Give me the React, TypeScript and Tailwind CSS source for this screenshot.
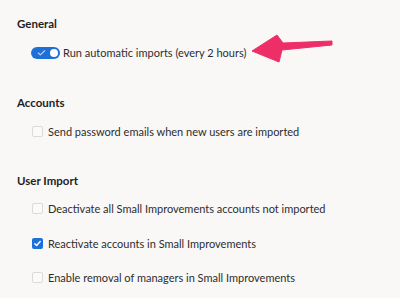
import React from "react";

const Check = ({ checked }: { checked?: boolean }) =>
  checked ? (
    <span className="flex h-[11px] w-[11px] shrink-0 items-center justify-center rounded-[2px] bg-[#1f6fd8]">
      <svg width="9" height="9" viewBox="0 0 10 10" fill="none">
        <path d="M2 5.2l2 2 4-4.4" stroke="white" strokeWidth="1.6" strokeLinecap="round" strokeLinejoin="round" />
      </svg>
    </span>
  ) : (
    <span className="h-[11px] w-[11px] shrink-0 rounded-[2px] border border-[#dcdad8] bg-[#fbfaf9]" />
  );

const Row = ({ checked, label }: { checked?: boolean; label: string }) => (
  <div className="flex h-[12px] items-center gap-[5px] pl-[32px]">
    <Check checked={checked} />
    <span className="whitespace-nowrap text-[11px] leading-none text-[#2d2d2d]">{label}</span>
  </div>
);

const Heading = ({ children }: { children: React.ReactNode }) => (
  <div className="pl-[17px] text-[11.5px] font-bold leading-none text-[#1f1f1f]">{children}</div>
);

export default function App() {
  return (
    <div
      className="relative h-[298px] w-[400px] overflow-hidden bg-[#f9f8f7]"
      style={{ fontFamily: "Lato, 'Noto Sans', sans-serif" }}
    >
      <div className="flex flex-col pt-[18px]">
        <Heading>General</Heading>
        <div className="mt-[17px] flex items-center gap-[3px] pl-[31px]">
          <span className="relative flex h-[12px] w-[29px] items-center rounded-full bg-[#1f6fd8]">
            <svg className="absolute left-[6px]" width="9" height="8" viewBox="0 0 10 8" fill="none">
              <path d="M1.5 4l2.2 2.2L8.5 1.5" stroke="#bcd5f5" strokeWidth="1.2" strokeLinecap="round" strokeLinejoin="round" />
            </svg>
            <span className="absolute right-[2px] h-[8px] w-[8px] rounded-full bg-white" />
          </span>
          <span className="whitespace-nowrap text-[11px] leading-none text-[#2d2d2d]">Run automatic imports (every 2 hours)</span>
        </div>
        <div className="mt-[38px]">
          <Heading>Accounts</Heading>
        </div>
        <div className="mt-[17px]">
          <Row label="Send password emails when new users are imported" />
        </div>
        <div className="mt-[38px]">
          <Heading>User Import</Heading>
        </div>
        <div className="mt-[16px] flex flex-col gap-[22.5px]">
          <Row label="Deactivate all Small Improvements accounts not imported" />
          <Row checked label="Reactivate accounts in Small Improvements" />
          <Row label="Enable removal of managers in Small Improvements" />
        </div>
      </div>
      <svg className="absolute left-0 top-0" width="400" height="298" viewBox="0 0 400 298">
        <path
          d="M252 51 L277 35 L283 43 L332 41 L332 45 L282 50 L279 62 Z"
          fill="#ee2f67"
          strokeLinejoin="round"
          stroke="#ee2f67"
          strokeWidth="1"
        />
      </svg>
    </div>
  );
}
